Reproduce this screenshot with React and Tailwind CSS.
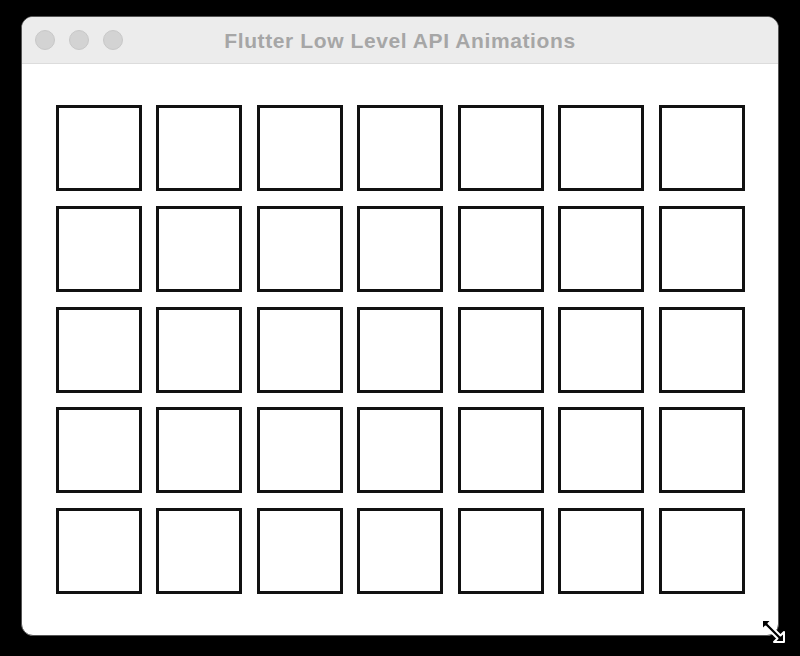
import React from 'react'

const rows = 5
const cols = 7

function ResizeCursor() {
  // diagonal double-headed arrow cursor (nw-se)
  return (
    <svg width="30" height="30" viewBox="0 0 30 30" className="absolute left-[758px] top-[616px]">
      <path
        d="M4 4 L14 4 L10.5 7.5 L22.5 19.5 L26 16 L26 26 L16 26 L19.5 22.5 L7.5 10.5 L4 14 Z"
        fill="#000"
        stroke="#fff"
        strokeWidth="2"
        strokeLinejoin="round"
      />
    </svg>
  )
}

export default function App() {
  const cells = Array.from({ length: rows * cols })

  return (
    <div className="relative w-[800px] h-[656px] bg-black overflow-hidden" style={{ fontFamily: '"Liberation Sans", Arial, sans-serif' }}>
      <div className="absolute left-[21px] top-[16px] w-[758px] h-[620px] rounded-[12px] overflow-hidden bg-white border border-[#555] flex flex-col">
        {/* Title bar */}
        <div className="relative h-[47px] shrink-0 bg-[#ececec] border-b border-[#dcdcdc] flex items-center justify-center">
          <div className="absolute left-[13px] top-[13px] flex gap-[14px]">
            <span className="w-[20px] h-[20px] rounded-full bg-[#d3d3d3] border border-[#c8c8c8]" />
            <span className="w-[20px] h-[20px] rounded-full bg-[#d3d3d3] border border-[#c8c8c8]" />
            <span className="w-[20px] h-[20px] rounded-full bg-[#d3d3d3] border border-[#c8c8c8]" />
          </div>
          <span className="text-[21px] tracking-[0.6px] font-bold text-[#a6a6a6] leading-none">Flutter Low Level API Animations</span>
        </div>

        {/* Content */}
        <div className="flex-1 flex items-center justify-center">
          <div className="grid grid-cols-7 gap-x-[14.5px] gap-y-[14.75px]">
            {cells.map((_, i) => (
              <div key={i} className="w-[86px] h-[86px] border-[3px] border-[#111]" />
            ))}
          </div>
        </div>
      </div>
      <ResizeCursor />
    </div>
  )
}
